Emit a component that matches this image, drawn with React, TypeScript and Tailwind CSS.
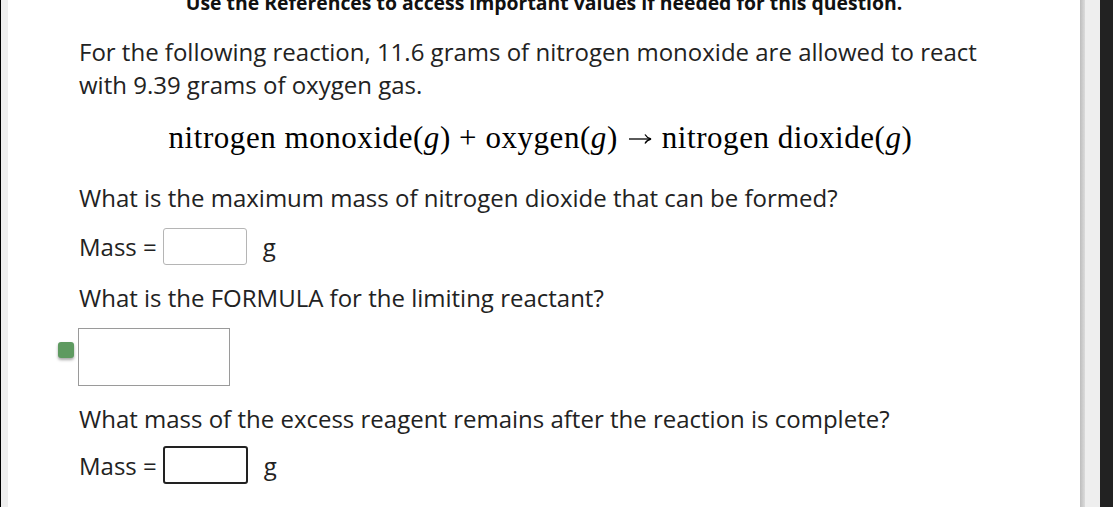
import React from "react";

function Arrow() {
  return (
    <svg width="24" height="14" viewBox="0 0 24 14" className="mx-[10px] inline-block align-[2px]">
      <path d="M1 7 H22" stroke="black" strokeWidth="1.3" fill="none" />
      <path d="M17 2.5 Q19 6 23 7 Q19 8 17 11.5" stroke="black" strokeWidth="1.3" fill="none" />
    </svg>
  );
}

export default function App() {
  const sans = { fontFamily: '"Open Sans", "Noto Sans", sans-serif' };
  return (
    <div className="flex h-[507px] w-[1113px] overflow-hidden bg-white" style={sans}>
      <div className="w-[1px] bg-black" />
      <div className="w-[7px] bg-[#eeeeee]" />
      <div className="flex w-[1072px] flex-col bg-white text-[24px] leading-[33px] text-[#222]">
        <div className="-mt-[12px] text-center text-[19.4px] font-bold leading-[30px] text-[#111]">
          Use the References to access important values if needed for this question.
        </div>
        <div className="pl-[71px] pr-[60px] pt-[17px]">
          <p className="leading-[33px]">
            For the following reaction, 11.6 grams of nitrogen monoxide are allowed to react
            <br />
            with 9.39 grams of oxygen gas.
          </p>
          <div
            className="mr-[18px] mt-[19px] text-center text-[31px] leading-[36px] tracking-[0.55px] text-black"
            style={{ fontFamily: '"Liberation Serif", "DejaVu Serif", serif' }}
          >
            nitrogen monoxide(<i>g</i>) + oxygen(<i>g</i>)
            <Arrow />
            nitrogen dioxide(<i>g</i>)
          </div>
          <p className="mt-[25px]">What is the maximum mass of nitrogen dioxide that can be formed?</p>
          <div className="mt-[14px] flex items-center">
            <span>Mass =</span>
            <div className="ml-[6px] h-[37px] w-[84px] rounded-[3px] border border-[#b5b5b5] bg-white" />
            <span className="ml-[16px]">g</span>
          </div>
          <p className="mt-[16px]">What is the FORMULA for the limiting reactant?</p>
          <div className="relative mt-[14px]">
            <div className="absolute -left-[21px] top-[14px] h-[16px] w-[16px] rounded-[3px] bg-[#5e9a60] shadow-[0_2px_3px_rgba(0,0,0,0.35)]" />
            <div className="-ml-[1px] h-[58px] w-[152px] border border-[#9a9a9a] bg-white" />
          </div>
          <p className="mt-[16px]">What mass of the excess reagent remains after the reaction is complete?</p>
          <div className="mt-[11px] flex items-center">
            <span>Mass =</span>
            <div className="ml-[6px] h-[38px] w-[85px] rounded-[3px] border-2 border-[#222] bg-white" />
            <span className="ml-[16px]">g</span>
          </div>
        </div>
      </div>
      <div className="w-[5px] bg-gradient-to-r from-[#bdbdbd] to-[#dcdcdc]" />
      <div className="w-[15px] bg-[#eeeeee]" />
      <div className="flex-1 bg-[#222222]" />
    </div>
  );
}
